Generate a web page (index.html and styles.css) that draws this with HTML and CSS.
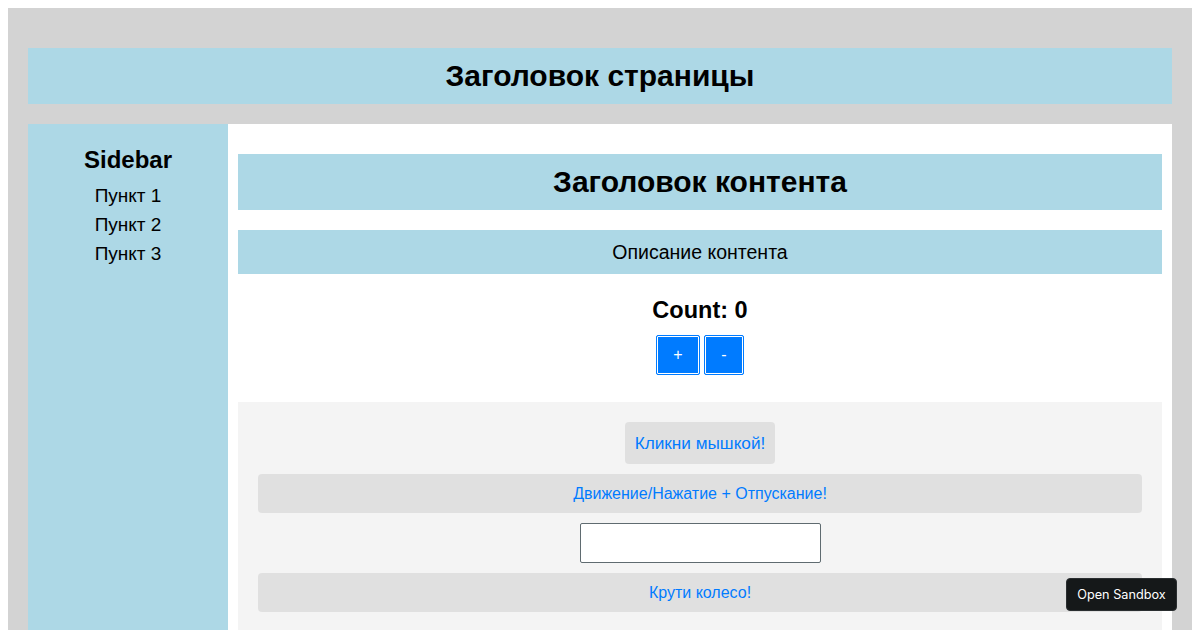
FILE: index.html
```html
<!DOCTYPE html>
<html lang="ru">
<head>
<meta charset="utf-8">
<title>Страница</title>
<link rel="stylesheet" href="styles.css">
</head>
<body>
<div class="page">
  <header class="page-header">Заголовок страницы</header>
  <div class="layout">
    <aside class="sidebar">
      <h2 class="sidebar-title">Sidebar</h2>
      <ul class="sidebar-list">
        <li>Пункт 1</li>
        <li>Пункт 2</li>
        <li>Пункт 3</li>
      </ul>
    </aside>
    <main class="content">
      <h1 class="content-title">Заголовок контента</h1>
      <p class="content-desc">Описание контента</p>
      <div class="counter">
        <h2 class="counter-value">Count: 0</h2>
        <div class="counter-buttons">
          <button class="counter-btn">+</button>
          <button class="counter-btn counter-btn-minus">-</button>
        </div>
      </div>
      <section class="events">
        <button class="event-btn">Кликни мышкой!</button>
        <div class="event-bar">Движение/Нажатие + Отпускание!</div>
        <input class="event-input" type="text">
        <div class="event-bar">Крути колесо!</div>
      </section>
    </main>
  </div>
</div>
<button class="sandbox-btn">Open Sandbox</button>
</body>
</html>
```
FILE: styles.css
```css
html, body {
  margin: 0;
  padding: 0;
}
body {
  margin: 8px;
  font-family: "Liberation Sans", Arial, sans-serif;
  color: #000;
  background: #fff;
}
.page {
  background: #d3d3d3;
  padding: 40px 20px 20px;
}
.page-header {
  background: #add8e6;
  height: 56px;
  display: flex;
  align-items: center;
  justify-content: center;
  font-size: 30px;
  font-weight: bold;
}
.layout {
  display: flex;
  margin-top: 20px;
}
.sidebar {
  width: 200px;
  flex: none;
  background: #add8e6;
  text-align: center;
  padding-top: 22px;
}
.sidebar-title {
  margin: 0 0 7px;
  font-size: 24px;
  line-height: 28px;
}
.sidebar-list {
  list-style: none;
  margin: 0;
  padding: 0;
  font-size: 19px;
  line-height: 29px;
}
.content {
  flex: 1;
  background: #fff;
  padding: 30px 10px 20px;
}
.content-title {
  margin: 0;
  background: #add8e6;
  height: 56px;
  display: flex;
  align-items: center;
  justify-content: center;
  font-size: 30px;
}
.content-desc {
  margin: 20px 0 0;
  background: #add8e6;
  height: 44px;
  display: flex;
  align-items: center;
  justify-content: center;
  font-size: 19.5px;
  padding-top: 1px;
  box-sizing: border-box;
}
.counter {
  text-align: center;
  padding: 21px 0 27px;
}
.counter-value {
  margin: 0;
  font-size: 23.5px;
  line-height: 30px;
}
.counter-buttons {
  display: flex;
  justify-content: center;
  gap: 4px;
  margin-top: 10px;
}
.counter-btn {
  width: 44px;
  height: 40px;
  background: #007bff;
  color: #fff;
  border: 1px solid #007bff;
  box-shadow: inset 0 0 0 1px #fff;
  border-radius: 2px;
  font-family: "Liberation Sans", Arial, sans-serif;
  font-size: 16px;
  padding: 0;
}
.counter-btn-minus {
  width: 40px;
}
.events {
  background: #f4f4f4;
  padding: 20px;
  display: flex;
  flex-direction: column;
  align-items: center;
  gap: 10px;
}
.event-btn {
  background: #e0e0e0;
  color: #007bff;
  border: none;
  border-radius: 4px;
  height: 42px;
  padding: 0 10px;
  font-family: "Liberation Sans", Arial, sans-serif;
  font-size: 17.2px;
}
.event-bar {
  align-self: stretch;
  background: #e0e0e0;
  color: #007bff;
  border-radius: 4px;
  height: 39px;
  display: flex;
  align-items: center;
  justify-content: center;
  font-size: 16px;
}
.event-input {
  width: 241px;
  height: 40px;
  box-sizing: border-box;
  border: 1px solid #5f6b70;
  border-radius: 2px;
  background: #fff;
  margin: 0;
}
.sandbox-btn {
  position: fixed;
  right: 23px;
  bottom: 19px;
  width: 111px;
  height: 33px;
  background: #151819;
  color: #fff;
  border: 1px solid #2a2e30;
  border-radius: 4px;
  font-family: Inter, "Liberation Sans", sans-serif;
  font-size: 12.7px;
  padding: 0;
}
```
